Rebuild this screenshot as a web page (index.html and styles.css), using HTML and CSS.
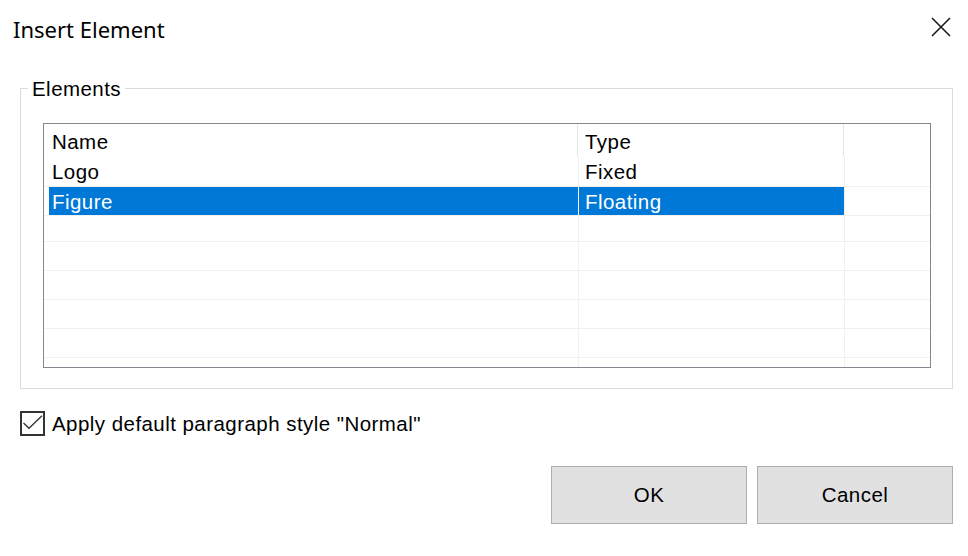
FILE: index.html
```html
<!DOCTYPE html>
<html lang="en">
<head>
    <meta charset="UTF-8">
    <title>Insert Element</title>
    <link rel="stylesheet" href="styles.css">
</head>
<body>
    <div class="dialog">
        <div class="titlebar">
            <span class="title">Insert Element</span>
            <svg class="close" width="20" height="20" viewBox="0 0 20 20">
                <path d="M1 1 L19 19 M19 1 L1 19" stroke="#1a1a1a" stroke-width="1.6" fill="none"/>
            </svg>
        </div>

        <fieldset class="group">
            <legend>Elements</legend>
            <div class="listview">
                <div class="row header">
                    <div class="cell name">Name</div>
                    <div class="cell type">Type</div>
                    <div class="cell rest"></div>
                </div>
                <div class="row">
                    <div class="cell name">Logo</div>
                    <div class="cell type">Fixed</div>
                    <div class="cell rest"></div>
                </div>
                <div class="row sel">
                    <div class="cell name">Figure</div>
                    <div class="cell type">Floating</div>
                    <div class="cell rest"></div>
                </div>
                <div class="row short"><div class="cell name"></div><div class="cell type"></div><div class="cell rest"></div></div>
                <div class="row"><div class="cell name"></div><div class="cell type"></div><div class="cell rest"></div></div>
                <div class="row"><div class="cell name"></div><div class="cell type"></div><div class="cell rest"></div></div>
                <div class="row"><div class="cell name"></div><div class="cell type"></div><div class="cell rest"></div></div>
                <div class="row"><div class="cell name"></div><div class="cell type"></div><div class="cell rest"></div></div>
                <div class="row filler"><div class="cell name"></div><div class="cell type"></div><div class="cell rest"></div></div>
            </div>
        </fieldset>

        <label class="check">
            <span class="box">
                <svg width="21" height="21" viewBox="0 0 21 21">
                    <path d="M1.5 10 L7 15.3 L20 2.8" stroke="#333" stroke-width="1.3" fill="none"/>
                </svg>
            </span>
            <span>Apply default paragraph style "Normal"</span>
        </label>

        <div class="buttons">
            <button>OK</button>
            <button>Cancel</button>
        </div>
    </div>
</body>
</html>
```

FILE: styles.css
```css
body {
    margin: 0;
    background: #ffffff;
    color: #000000;
    font-family: "Liberation Sans", Arial, sans-serif;
    font-size: 20.5px;
    letter-spacing: 0.45px;
}

.dialog {
    width: 968px;
    height: 556px;
    overflow: hidden;
}

.titlebar {
    height: 56px;
    display: flex;
    justify-content: space-between;
    align-items: center;
    padding: 0 17px 0 13px;
}

.title {
    font-family: "Noto Sans", sans-serif;
    font-size: 22px;
    line-height: 28px;
    letter-spacing: 0;
    margin-top: 1px;
}

.close {
    margin-top: -3px;
}

.group {
    margin: 21px 15px 0 20px;
    padding: 0 21px 20px 7px;
    border: 1px solid #dcdcdc;
}

.group legend {
    padding: 0 4px;
    line-height: 23px;
}

.listview {
    margin: 23px 0 0 15px;
    height: 243px;
    border: 1px solid #828790;
    display: flex;
    flex-direction: column;
}

.row {
    display: flex;
    height: 28px;
    border-bottom: 1px solid #f0f0f0;
}

.row:nth-child(2) {
    height: 29px;
}

.row.short {
    height: 25px;
}

.row.filler {
    flex: 1;
    border-bottom: none;
}

.row.header {
    height: 33px;
    border-bottom: none;
}

.cell {
    padding-top: 1px;
    line-height: 27px;
    white-space: nowrap;
}

.cell.name {
    width: 535px;
    padding-left: 8px;
    box-sizing: border-box;
    border-right: 1px solid #f0f0f0;
}

.cell.type {
    width: 266px;
    padding-left: 6px;
    box-sizing: border-box;
    border-right: 1px solid #f0f0f0;
}

.cell.rest {
    flex: 1;
}

.header .cell {
    padding-top: 3px;
    line-height: 30px;
}

.header .cell.name {
    width: 534px;
    border-right-color: #e5e5e5;
}

.header .cell.type {
    width: 266px;
    padding-left: 7px;
    border-right-color: #e5e5e5;
}

.sel .cell.name {
    color: #ffffff;
    background: linear-gradient(to right, transparent 5px, #0078d7 5px);
    border-right-color: #ffffff;
}

.sel .cell.type {
    color: #ffffff;
    background: #0078d7;
}

.check {
    display: flex;
    align-items: center;
    gap: 7px;
    margin: 22px 0 0 20px;
    line-height: 23px;
}

.box {
    width: 25px;
    height: 25px;
    box-sizing: border-box;
    border: 2px solid #333333;
    display: flex;
}

.buttons {
    display: flex;
    justify-content: flex-end;
    gap: 10px;
    margin: 30px 15px 0 0;
}

.buttons button {
    width: 196px;
    height: 58px;
    background: #e1e1e1;
    border: 1px solid #adadad;
    font-family: "Liberation Sans", Arial, sans-serif;
    font-size: 20.5px;
    letter-spacing: 0.45px;
    color: #000000;
    padding: 0;
}
```
